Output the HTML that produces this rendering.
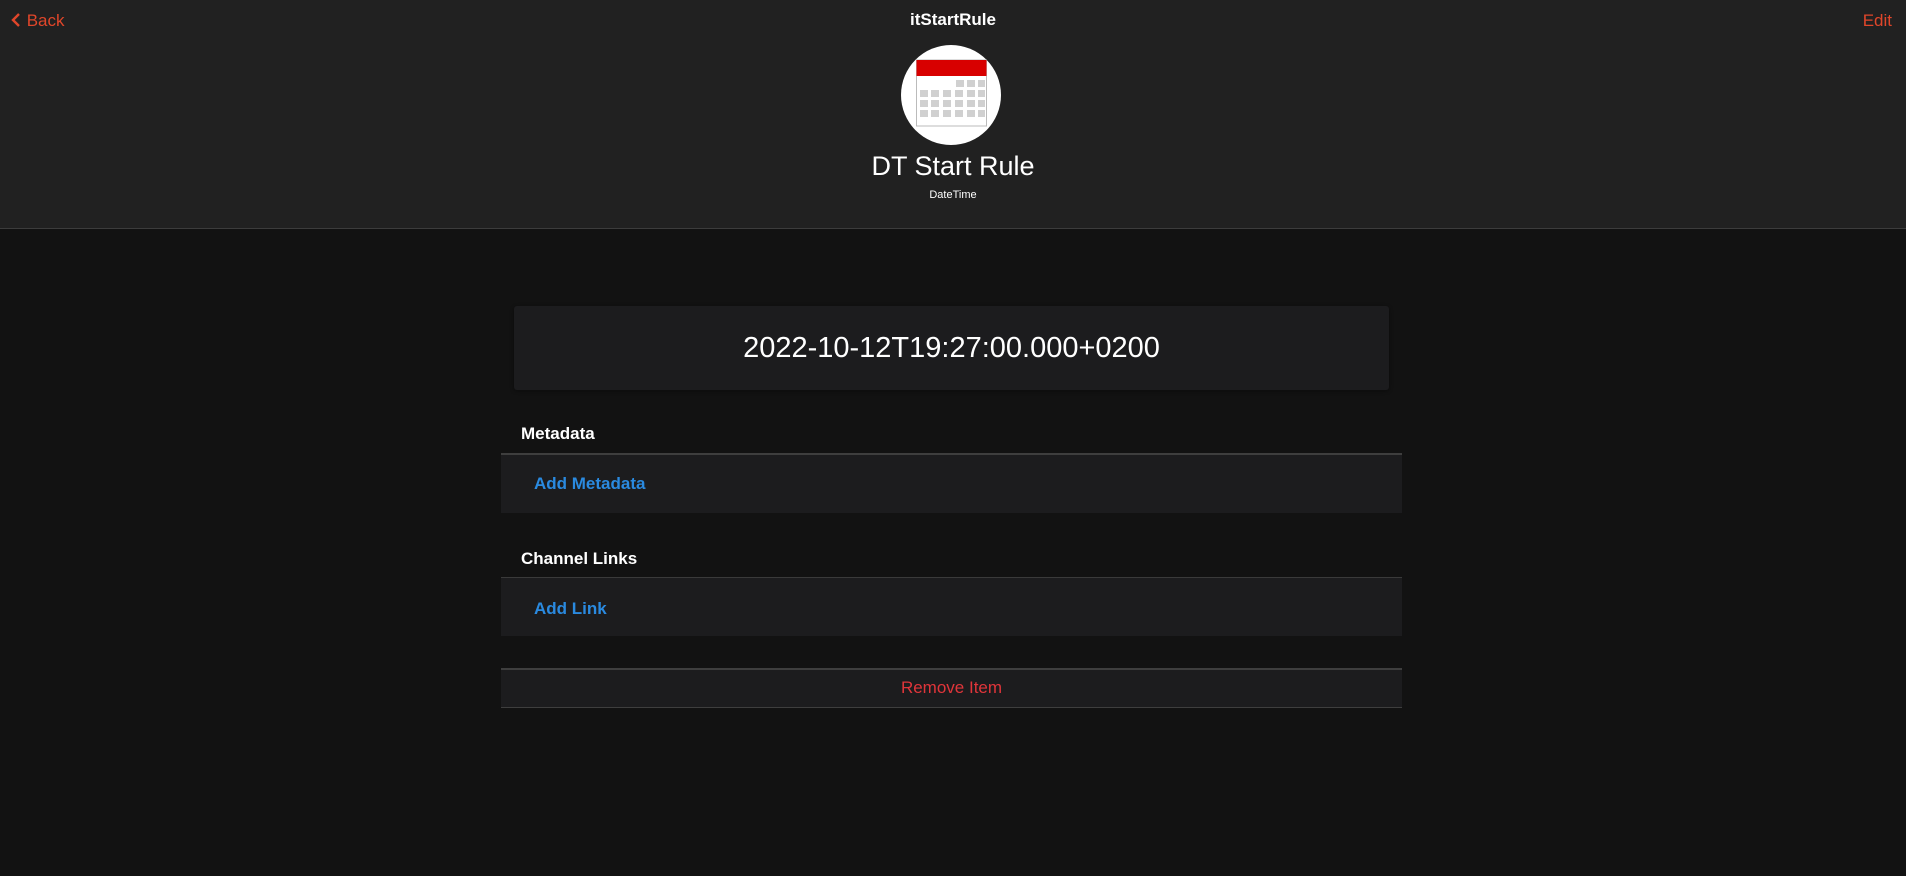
<!DOCTYPE html>
<html><head><meta charset="utf-8"><style>
*{margin:0;padding:0;box-sizing:border-box}
body{width:1906px;height:876px;background:#121212;font-family:"Liberation Sans",sans-serif;position:relative;overflow:hidden;color:#fff}
.hdr{position:absolute;left:0;top:0;width:1906px;height:229px;background:#212121;border-bottom:1px solid #3c3c3c}
.abs{position:absolute;white-space:nowrap}
</style></head><body>
<div class="hdr"></div>
<div class="abs" style="left:10px;top:11px;color:#e0462a;font-size:17px;">
<svg width="12" height="16" viewBox="0 0 12 16" style="vertical-align:-2px"><path d="M9 2 L3 8 L9 14" stroke="#e0462a" stroke-width="2.4" fill="none"/></svg> Back</div>
<div class="abs" style="left:0;width:1906px;text-align:center;top:10px;font-size:17px;font-weight:bold">itStartRule</div>
<div class="abs" style="right:14px;top:11px;color:#e0462a;font-size:17px">Edit</div>
<div class="abs" style="left:901px;top:45px;width:100px;height:100px;border-radius:50%;background:#fff"></div>
<svg class="abs" style="left:916px;top:58px" width="72" height="72" viewBox="0 0 72 72">
<rect x="0.5" y="2" width="70" height="66" fill="#fff" stroke="#bbb"/>
<rect x="0.5" y="2" width="70" height="16" fill="#d80000"/>
<g fill="#d0d0d0">
<rect x="40" y="22" width="8" height="7"/><rect x="51" y="22" width="8" height="7"/><rect x="62" y="22" width="7" height="7"/>
<rect x="4" y="32" width="8" height="7"/><rect x="15" y="32" width="8" height="7"/><rect x="27" y="32" width="8" height="7"/><rect x="39" y="32" width="8" height="7"/><rect x="51" y="32" width="8" height="7"/><rect x="62" y="32" width="7" height="7"/>
<rect x="4" y="42" width="8" height="7"/><rect x="15" y="42" width="8" height="7"/><rect x="27" y="42" width="8" height="7"/><rect x="39" y="42" width="8" height="7"/><rect x="51" y="42" width="8" height="7"/><rect x="62" y="42" width="7" height="7"/>
<rect x="4" y="52" width="8" height="7"/><rect x="15" y="52" width="8" height="7"/><rect x="27" y="52" width="8" height="7"/><rect x="39" y="52" width="8" height="7"/><rect x="51" y="52" width="8" height="7"/><rect x="62" y="52" width="7" height="7"/>
</g></svg>
<div class="abs" style="left:0;width:1906px;text-align:center;top:151px;font-size:27px">DT Start Rule</div>
<div class="abs" style="left:0;width:1906px;text-align:center;top:189px;font-size:11px">DateTime</div>

<div class="abs" style="left:514px;top:306px;width:875px;height:84px;background:#1c1c1e;border-radius:3px;box-shadow:0 1px 4px rgba(0,0,0,.4)"></div>
<div class="abs" style="left:514px;width:875px;text-align:center;top:332px;font-size:29px">2022-10-12T19:27:00.000+0200</div>

<div class="abs" style="left:521px;top:424px;font-size:17px;font-weight:bold">Metadata</div>
<div class="abs" style="left:501px;top:453px;width:901px;height:60px;background:#1c1c1e;border-top:2px solid #3e3e3e"></div>
<div class="abs" style="left:534px;top:474px;font-size:17px;color:#2a8ae0;font-weight:bold">Add Metadata</div>

<div class="abs" style="left:521px;top:549px;font-size:17px;font-weight:bold">Channel Links</div>
<div class="abs" style="left:501px;top:577px;width:901px;height:59px;background:#1c1c1e;border-top:1px solid #3a3a3a"></div>
<div class="abs" style="left:534px;top:599px;font-size:17px;color:#2a8ae0;font-weight:bold">Add Link</div>

<div class="abs" style="left:501px;top:668px;width:901px;height:40px;background:#1c1c1e;border-top:2px solid #3e3e3e;border-bottom:1px solid #3e3e3e"></div>
<div class="abs" style="left:501px;width:901px;text-align:center;top:678px;font-size:17px;color:#e0353a">Remove Item</div>
</body></html>
